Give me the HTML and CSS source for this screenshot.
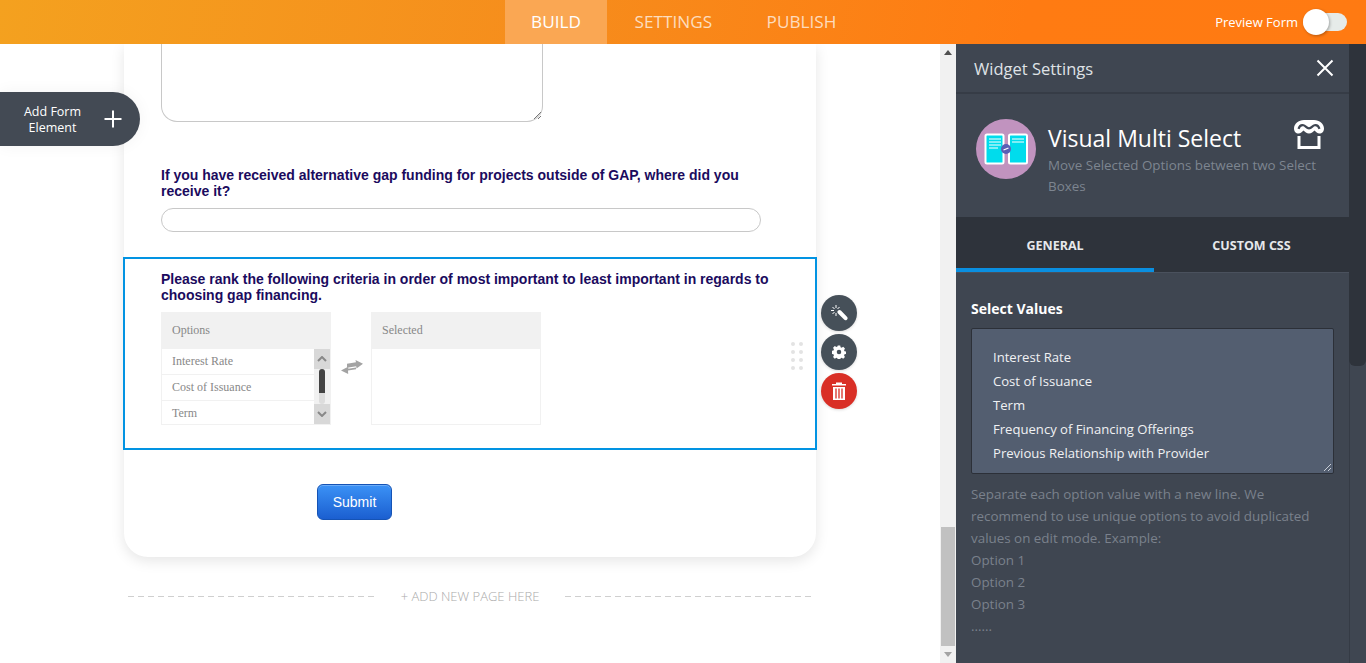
FILE: index.html
```html
<!DOCTYPE html>
<html lang="en">
<head>
<meta charset="utf-8">
<title>Form Builder</title>
<link rel="stylesheet" href="styles.css">
</head>
<body>
<header class="topbar">
  <nav class="nav">
    <a class="nav-item active">BUILD</a>
    <a class="nav-item">SETTINGS</a>
    <a class="nav-item">PUBLISH</a>
  </nav>
  <div class="preview">
    <span>Preview Form</span>
    <span class="toggle"><span class="knob"></span></span>
  </div>
</header>
<div class="main">
  <section class="canvas">
    <button class="add-element">
      <span class="add-text">Add Form<br>Element</span>
      <svg class="add-plus" width="18" height="18" viewBox="0 0 18 18"><path d="M9 0.500v17M0.500 9h17" stroke="#fff" stroke-width="2" fill="none"/></svg>
    </button>
    <div class="card">
      <div class="row row-first">
        <div class="fake-textarea">
          <svg class="grip" width="9" height="9" viewBox="0 0 9 9"><path d="M1 8L8 1M5 8L8 5" stroke="#777" stroke-width="1" fill="none"/></svg>
        </div>
      </div>
      <div class="row row-second">
        <label class="q">If you have received alternative gap funding for projects outside of GAP, where did you receive it?</label>
        <div class="text-input"></div>
      </div>
      <div class="row row-selected">
        <label class="q">Please rank the following criteria in order of most important to least important in regards to choosing gap financing.</label>
        <div class="multi">
          <div class="mbox">
            <div class="mhead">Options</div>
            <div class="mbody">
              <ul class="mlist">
                <li>Interest Rate</li>
                <li>Cost of Issuance</li>
                <li>Term</li>
              </ul>
              <div class="mscroll">
                <div class="mbtn"><svg width="10" height="6" viewBox="0 0 10 6"><path d="M1 5l4-4 4 4" stroke="#888" stroke-width="2" fill="none"/></svg></div>
                <div class="mtrack"><div class="mthumb"></div></div>
                <div class="mbtn"><svg width="10" height="6" viewBox="0 0 10 6"><path d="M1 1l4 4 4-4" stroke="#888" stroke-width="2" fill="none"/></svg></div>
              </div>
            </div>
          </div>
          <div class="swap">
            <svg width="22" height="16" viewBox="0 0 22 16"><path d="M6 3.800l9-1.500L14.500 0 22 3.800l-6.500 4.700-.3-2.300L6 7.800zM15 9.200l-8 1.300.2 3.500L0 10.500 7.500 6.500l-.2 2.200L15 7.500z" fill="#a3a3a3"/></svg>
          </div>
          <div class="mbox">
            <div class="mhead">Selected</div>
            <div class="mbody mbody-empty"></div>
          </div>
        </div>
        <div class="dots"><i></i><i></i><i></i><i></i><i></i><i></i><i></i><i></i></div>
        <div class="actions">
          <button class="act">
            <svg width="18" height="18" viewBox="0 0 18 18"><path d="M9.500 8l6 6.200" stroke="#fff" stroke-width="4" stroke-linecap="round" fill="none"/><path d="M6 1v3M6 9v3M1 6.500h3M2.500 3l2 2M9.500 3l-2 2M2.500 10l2-2" stroke="#fff" stroke-width="1" fill="none"/></svg>
          </button>
          <button class="act">
            <svg width="14" height="14" viewBox="0 0 16 16"><path d="M6.600.5h2.800l.4 2 1.200.6 1.800-1 2 2-1 1.800.5 1.200 2 .4v2.800l-2 .4-.5 1.200 1 1.800-2 2-1.800-1-1.200.5-.4 2H6.600l-.4-2-1.200-.5-1.800 1-2-2 1-1.800-.5-1.200-2-.4V6.600l2-.4.5-1.200-1-1.800 2-2 1.800 1 1.200-.6z" fill="#fff"/><circle cx="8" cy="8" r="2.600" fill="#465059"/></svg>
          </button>
          <button class="act act-del">
            <svg width="14" height="18" viewBox="0 0 14 18"><path d="M0 2h14v1.500H0zM4 .5h6V2H4zM1 5h12v13H1z" fill="#fff"/><path d="M4 6.500v10M7 6.500v10M10 6.500v10" stroke="#d92f26" stroke-width="1.300"/></svg>
          </button>
        </div>
      </div>
      <div class="row-submit"><button class="submit">Submit</button></div>
    </div>
    <div class="add-page">
      <span class="dash"></span>
      <span class="add-page-text">+ ADD NEW PAGE HERE</span>
      <span class="dash"></span>
    </div>
  </section>
  <div class="page-scroll">
    <div class="sb-top"><svg width="8" height="5" viewBox="0 0 8 5"><path d="M4 0l4 5H0z" fill="#505050"/></svg></div>
    <div class="sb-track"><div class="sb-thumb"></div></div>
    <div class="sb-top"><svg width="8" height="5" viewBox="0 0 8 5"><path d="M4 5L0 0h8z" fill="#a3a3a3"/></svg></div>
  </div>
  <aside class="panel">
    <div class="panel-inner">
      <div class="panel-title">
        <span>Widget Settings</span>
        <svg width="18" height="18" viewBox="0 0 18 18"><path d="M1.500 1.500l15 15M16.500 1.500l-15 15" stroke="#fff" stroke-width="2" fill="none"/></svg>
      </div>
      <div class="widget-head">
        <div class="logo">
          <svg width="60" height="60" viewBox="0 0 60 60">
            <circle cx="30" cy="30" r="30" fill="#c193bf"/>
            <rect x="9.500" y="15.500" width="18" height="29" rx="1.500" fill="#00dcec" stroke="#fff" stroke-width="2"/>
            <rect x="33" y="15.500" width="18" height="29" rx="1.500" fill="#00dcec" stroke="#fff" stroke-width="2"/>
            <path d="M13 20h12M13 23h12M13 26h12M13 29h9M36 20h12M36 23h12" stroke="#fff" stroke-width="1"/>
            <circle cx="30" cy="30" r="5" fill="#5a5fb5"/>
            <path d="M27.500 31l5-2" stroke="#fff" stroke-width="1.200"/>
          </svg>
        </div>
        <div class="widget-meta">
          <h1 class="widget-name">Visual Multi Select</h1>
          <p class="widget-desc">Move Selected Options between two Select Boxes</p>
        </div>
        <svg class="store" width="30" height="29" viewBox="0 0 30 29"><path d="M10 0h10c5.500 0 10 4 10 8.500 0 3-2 5-4.500 5-2.200 0-3.500-1.500-5-3-1.500 1.500-3 3-5.500 3s-4-1.500-5.500-3c-1.500 1.500-2.800 3-5 3C2 13.500 0 11.500 0 8.500 0 4 4.500 0 10 0z" fill="#fff"/><path d="M4.500 8.800C5.500 6 7.500 4.800 9.500 5.300c2 .5 3 3 5.500 3s3.500-2.500 5.500-3c2-.5 4 .7 5 3.500" fill="none" stroke="#3f4651" stroke-width="2.200"/><path d="M5 16v11.500h20V16" fill="none" stroke="#fff" stroke-width="3"/></svg>
      </div>
      <div class="tabs">
        <div class="tab tab-on">GENERAL</div>
        <div class="tab">CUSTOM CSS</div>
      </div>
      <div class="settings">
        <div class="set-label">Select Values</div>
        <div class="values">
          <div>Interest Rate</div>
          <div>Cost of Issuance</div>
          <div>Term</div>
          <div>Frequency of Financing Offerings</div>
          <div>Previous Relationship with Provider</div>
          <svg class="values-grip" width="9" height="9" viewBox="0 0 9 9"><path d="M1 8L8 1M5 8L8 5" stroke="#c9ced6" stroke-width="1" fill="none"/></svg>
        </div>
        <p class="help">Separate each option value with a new line. We recommend to use unique options to avoid duplicated values on edit mode. Example:<br>Option 1<br>Option 2<br>Option 3<br>......</p>
      </div>
    </div>
    <div class="panel-scroll"><div class="panel-thumb"></div></div>
  </aside>
</div>
</body>
</html>
```
FILE: styles.css
```css
* { box-sizing: border-box; }
html, body { margin: 0; height: 100%; overflow: hidden; }
body { display: flex; flex-direction: column; background: #fff; font-family: "Open Sans", "Noto Sans", sans-serif; }
button { font: inherit; border: 0; padding: 0; }

.topbar { height: 44px; flex: none; display: flex; align-items: center; position: relative; z-index: 3;
  background: linear-gradient(100deg, #f4a11f 0%, #f68d1c 40%, #ff7b12 75%, #ff7a12 100%); }
.nav { display: flex; height: 100%; margin-left: 505px; }
.nav-item { display: flex; align-items: center; justify-content: center; padding: 0 27px 2px 27.500px; color: rgba(255,255,255,.72); font-size: 17.200px; }
.nav-item.active { background: #faa753; color: #fff; width: 102px; padding: 0 0 2px; }
.preview { margin-left: auto; margin-right: 19px; display: flex; align-items: center; gap: 5px; color: #fff; font-size: 13px; }
.toggle { width: 44px; height: 18px; border-radius: 9px; background: #e6ebe9; position: relative; display: block; }
.knob { position: absolute; left: 0; top: -4px; width: 26px; height: 26px; border-radius: 50%; background: #fff; box-shadow: 1px 1px 3px rgba(0,0,0,.3); }

.main { flex: 1; min-height: 0; display: flex; }
.canvas { flex: 1; min-width: 0; position: relative; padding-left: 124px; overflow: hidden; }

.add-element { position: absolute; left: 0; top: 48px; width: 140px; height: 54px; border-radius: 0 27px 27px 0; background: #434a54;
  color: #fff; display: flex; align-items: center; box-shadow: 0 0 16px rgba(0,0,0,.05); z-index: 2; }
.add-text { width: 105px; padding-top: 2px; font-size: 12.500px; line-height: 16px; text-align: center; }
.add-plus { margin-left: -1px; }

.card { width: 692px; height: 513px; background: #fff; border-radius: 0 0 24px 24px; box-shadow: 0 4px 14px rgba(0,0,0,.1); }
.row { padding-left: 37px; }
.row-first { height: 123px; }
.fake-textarea { width: 382px; height: 78px; border: 1px solid #c8c8c8; border-top: 0; border-radius: 0 0 16px 16px; position: relative; }
.grip { position: absolute; right: 0; bottom: 1px; }
.row-second { height: 90px; }
.q { display: block; width: 620px; font: bold 14px/16px "Liberation Sans", Arial, sans-serif; color: #1b0b5e; }
.text-input { width: 600px; height: 24px; margin-top: 9px; border: 1px solid #c8c8c8; border-radius: 12px; }

.row-selected { position: relative; height: 193px; margin: 0 -1px; padding: 12px 0 0 36px; border: 2px solid #0293e2; width: 694px; }
.multi { display: flex; margin-top: 9px; }
.mbox { width: 170px; height: 113px; border: 1px solid #f1f1f1; border-top: 0; font: 12px/1 "Liberation Serif", serif; color: #888; display: flex; flex-direction: column; }
.mhead { height: 37px; flex: none; background: #f1f1f1; margin: 0 -1px; padding: 12px 11px 0; }
.mbody { flex: 1; display: flex; min-height: 0; }
.mlist { list-style: none; margin: 0; padding: 0; flex: 1; overflow: hidden; }
.mlist li { height: 26px; padding: 6px 10px 0; border-bottom: 1px solid #f1f1f1; }
.mscroll { width: 16px; display: flex; flex-direction: column; background: #f1f1f1; }
.mbtn { height: 20px; flex: none; background: #d8d8d8; display: flex; align-items: center; justify-content: center; }
.mtrack { flex: 1; padding: 0 5px; }
.mthumb { height: 100%; width: 6px; border-radius: 3px; background: linear-gradient(#444 0, #444 69%, #ddd 69%, #ddd 100%); }
.swap { width: 40px; display: flex; justify-content: center; padding: 48px 0 0 1px; }

.dots { position: absolute; left: 666px; top: 83px; display: grid; grid-template-columns: 4px 4px; gap: 4px; }
.dots i { display: block; width: 4px; height: 4px; border-radius: 50%; background: #e3e3e3; }
.actions { position: absolute; left: 696px; top: 36px; display: flex; flex-direction: column; gap: 3px; z-index: 2; }
.act { width: 36px; height: 36px; border-radius: 50%; background: #465059; display: flex; align-items: center; justify-content: center; box-shadow: 0 1px 3px rgba(0,0,0,.15); }
.act-del { background: #d92f26; }

.row-submit { padding: 34px 0 0 193px; }
.submit { width: 75px; height: 36px; border: 1px solid #1553b5; border-radius: 6px; color: #fff; font: 14px "Liberation Sans", Arial, sans-serif;
  background: linear-gradient(#3b92f6, #1b5fd0); box-shadow: inset 0 1px 0 rgba(255,255,255,.25); }

.add-page { width: 692px; margin-top: 29px; padding: 0 4px; display: flex; align-items: center; justify-content: space-between; }
.dash { width: 247px; height: 1px; background: repeating-linear-gradient(90deg, #cfcfcf 0, #cfcfcf 6px, transparent 6px, transparent 10px); }
.add-page-text { font-size: 13px; line-height: 20px; color: #aaa; font-weight: 300; }

.page-scroll { width: 16px; flex: none; background: #f1f1f1; display: flex; flex-direction: column; }
.sb-top { height: 17px; flex: none; display: flex; align-items: center; justify-content: center; }
.sb-track { flex: 1; padding: 466px 1px 0; }
.sb-thumb { height: 100%; background: #c1c1c1; }

.panel { width: 410px; flex: none; display: flex; background: #3f4651; color: #fff; overflow: hidden; }
.panel-inner { flex: 1; min-width: 0; }
.panel-title { height: 50px; padding: 0 15px 0 18px; display: flex; align-items: center; justify-content: space-between; font-size: 16.500px; color: #dfe2e6;
  border-bottom: 2px solid #363c46; }
.widget-head { height: 123px; padding: 25px 0 0 20px; display: flex; position: relative; }
.logo { width: 60px; height: 60px; flex: none; }
.widget-meta { margin-left: 12px; width: 285px; }
.widget-name { margin: 0; font-size: 23px; line-height: 30px; font-weight: 400; color: #fff; margin-top: 4px; }
.widget-desc { margin: 2px 0 0; font-size: 13.400px; line-height: 21px; color: #7d8590; }
.store { position: absolute; left: 338px; top: 26px; }
.tabs { height: 55px; display: flex; background: #2e333b; font-size: 12.500px; font-weight: 700; color: #e6e8eb; }
.tab { height: 55px; width: 195px; padding-top: 20px; text-align: center; }
.tab-on { width: 198px; border-bottom: 4px solid #0a8fe0; }
.settings { padding: 26px 15px 0; border-top: 1px solid #4a515d; }
.set-label { font-size: 14px; font-weight: 700; line-height: 20px; color: #fff; }
.values { position: relative; width: 363px; height: 146px; margin-top: 9px; padding: 16px 21px 0; background: #535e70; border: 1px solid #2c3038; border-radius: 2px;
  font-size: 13.100px; line-height: 24px; color: #f0f1f3; }
.values-grip { position: absolute; right: 1px; bottom: 1px; }
.help { margin: 9px 0 0; font-size: 13.400px; line-height: 22px; color: #7a818c; }
.panel-scroll { width: 17px; flex: none; border-left: 1px solid #353b45; }
.panel-thumb { height: 322px; margin-left: -1px; background: #2e333b; border-radius: 0 0 6px 6px; }
```
